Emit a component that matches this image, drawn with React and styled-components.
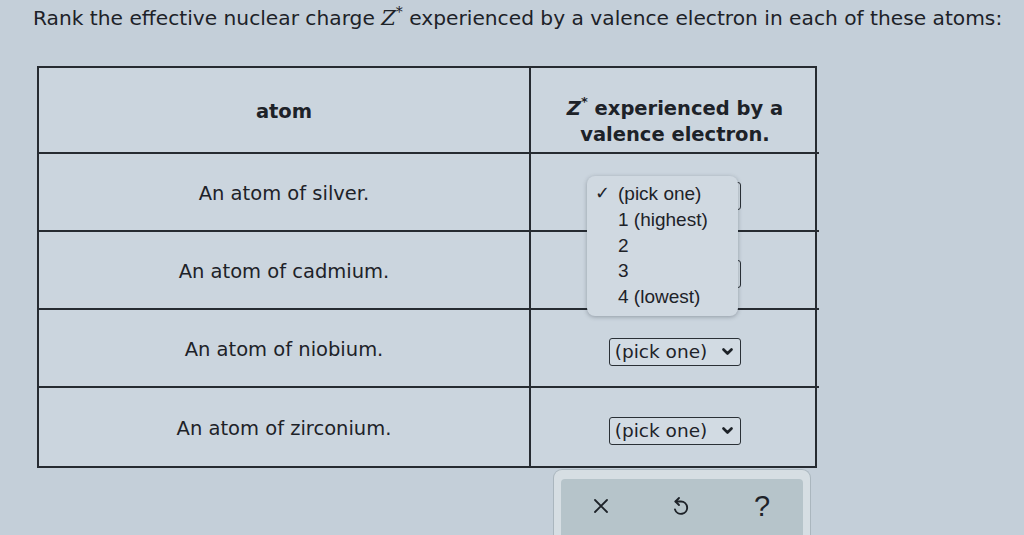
import React from "react";
import styled, { createGlobalStyle } from "styled-components";

const GlobalStyle = createGlobalStyle`
  html, body {
    margin: 0;
    padding: 0;
    background: #c4cfd9;
    font-family: "DejaVu Sans", Verdana, sans-serif;
    color: #1d2228;
  }
`;

const Page = styled.div`
  position: relative;
  width: 1024px;
  height: 535px;
  overflow: hidden;
  padding: 6px 0 0 33px;
  box-sizing: border-box;
`;

const Title = styled.p`
  margin: 0;
  font-size: 20.2px;
  line-height: 24px;
  white-space: nowrap;
`;

const SerifZ = styled.span`
  font-family: "DejaVu Serif", "Liberation Serif", serif;
  font-style: italic;
  font-size: 21px;
  sup {
    font-size: 14px;
    font-style: normal;
    vertical-align: 8px;
    line-height: 0;
  }
`;

const Table = styled.div`
  margin: 36px 0 0 4px;
  width: 780px;
  display: grid;
  grid-template-columns: 492px 288px;
  grid-template-rows: 86px repeat(4, 78px);
  border: 2px solid #262b31;
  box-sizing: border-box;
  background: #cbd5de;
`;

const Cell = styled.div`
  display: flex;
  align-items: center;
  justify-content: center;
  text-align: center;
  border-right: ${(p) => (p.$last ? "none" : "2px solid #262b31")};
  border-bottom: ${(p) => (p.$bottom ? "none" : "2px solid #262b31")};
  font-size: 19.5px;
  line-height: 26px;
  padding-top: ${(p) => p.$pad || "4px"};
`;

const HeadText = styled.div`
  font-weight: bold;
  font-size: 19.5px;
  line-height: 26px;
`;

const BoldZ = styled.span`
  font-style: italic;
  sup {
    font-size: 13px;
    vertical-align: 9px;
    line-height: 0;
  }
`;

const Select = styled.div`
  display: flex;
  align-items: center;
  gap: 15px;
  height: 26px;
  padding: 0 7px 0 5px;
  border: 1.5px solid #2a3036;
  border-radius: 3px;
  background: #d2dbe3;
  font-size: 18.5px;
  margin-top: 4px;
`;

const Chevron = () => (
  <svg width="11" height="8" viewBox="0 0 11 8">
    <path d="M1.5 1.5 L5.5 5.5 L9.5 1.5" fill="none" stroke="#1d2228" strokeWidth="2.6" strokeLinecap="round" strokeLinejoin="round" />
  </svg>
);

const Popup = styled.ul`
  position: absolute;
  left: 587px;
  top: 176px;
  width: 151px;
  margin: 0;
  padding: 5px 0 6px;
  list-style: none;
  background: #d0d9e1;
  border-radius: 8px;
  box-shadow: 0 1px 4px rgba(40, 50, 60, 0.35);
  font-family: "Liberation Sans", Arial, sans-serif;
  font-size: 19px;
`;

const Option = styled.li`
  position: relative;
  height: 25.8px;
  line-height: 25.8px;
  padding-left: 31px;
`;

const Check = styled.span`
  position: absolute;
  left: 8px;
  font-size: 18px;
`;

const Toolbar = styled.div`
  margin: 1px 0 0 520px;
  width: 258px;
  height: 70px;
  padding: 9px 7px 0;
  box-sizing: border-box;
  background: #d6dee3;
  border: 1px solid #aab6be;
  border-bottom: none;
  border-radius: 9px 9px 0 0;
`;

const ToolPanel = styled.div`
  height: 100%;
  display: grid;
  grid-template-columns: 80px 80px 82px;
  align-items: center;
  background: #b6c4ca;
  border-radius: 4px 4px 0 0;
  padding-bottom: 6px;
  box-sizing: border-box;
`;

const ToolButton = styled.div`
  display: flex;
  justify-content: center;
  color: #1d2228;
`;

const Help = styled.span`
  font-family: "Liberation Sans", Arial, sans-serif;
  font-size: 29px;
  line-height: 1;
  color: #1d2228;
`;

const rows = ["An atom of silver.", "An atom of cadmium.", "An atom of niobium.", "An atom of zirconium."];

export default function App() {
  return (
    <>
      <GlobalStyle />
      <Page>
        <Title>
          Rank the effective nuclear charge <SerifZ>Z<sup>*</sup></SerifZ> experienced by a valence electron in each of these atoms:
        </Title>
        <Table>
          <Cell $pad="4px">
            <HeadText>atom</HeadText>
          </Cell>
          <Cell $pad="24px" $last>
            <HeadText>
              <BoldZ>Z<sup>*</sup></BoldZ> experienced by a<br />valence electron.
            </HeadText>
          </Cell>
          {rows.map((r, i) => (
            <React.Fragment key={r}>
              <Cell $bottom={i === rows.length - 1}>{r}</Cell>
              <Cell $last $bottom={i === rows.length - 1}>
                <Select>
                  (pick one) <Chevron />
                </Select>
              </Cell>
            </React.Fragment>
          ))}
        </Table>
        <Toolbar>
          <ToolPanel>
            <ToolButton>
              <svg width="16" height="16" viewBox="0 0 16 16">
                <path d="M2 2 L14 14 M14 2 L2 14" stroke="#1d2228" strokeWidth="1.8" strokeLinecap="round" />
              </svg>
            </ToolButton>
            <ToolButton>
              <svg width="18" height="21" viewBox="0 0 18 21">
                <path d="M3.5 5.5 H9 A6.2 6.2 0 1 1 3 13.5" fill="none" stroke="#1d2228" strokeWidth="1.9" strokeLinecap="round" />
                <path d="M7 2 L3.5 5.5 L7 9" fill="none" stroke="#1d2228" strokeWidth="1.9" strokeLinecap="round" strokeLinejoin="round" />
              </svg>
            </ToolButton>
            <ToolButton>
              <Help>?</Help>
            </ToolButton>
          </ToolPanel>
        </Toolbar>
        <Popup>
          <Option>
            <Check>✓</Check>(pick one)
          </Option>
          <Option>1 (highest)</Option>
          <Option>2</Option>
          <Option>3</Option>
          <Option>4 (lowest)</Option>
        </Popup>
      </Page>
    </>
  );
}
